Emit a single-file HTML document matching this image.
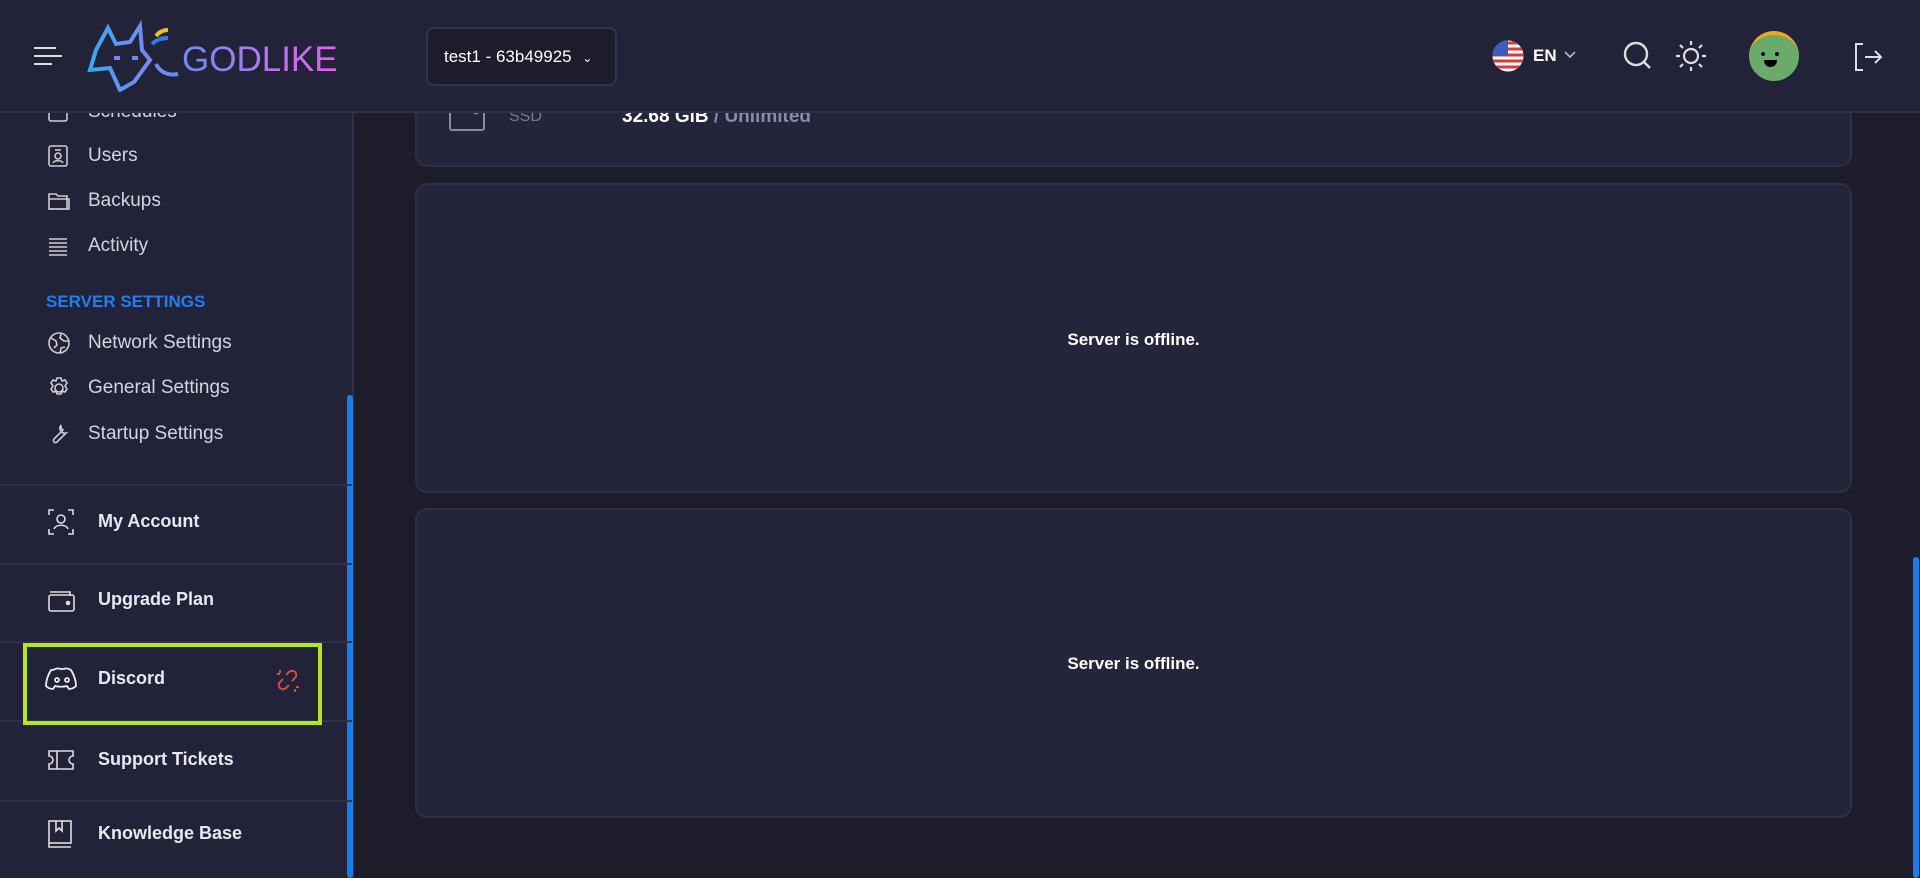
<!DOCTYPE html>
<html><head><meta charset="utf-8"><style>
*{box-sizing:border-box;margin:0;padding:0}
body{width:1920px;height:878px;overflow:hidden;background:#1c1c2a;font-family:"Liberation Sans",sans-serif;color:#e6e6ee;position:relative}
.header{position:absolute;left:0;top:0;width:1920px;height:113px;background:#222239;border-bottom:2px solid #303049;z-index:5}
.side{position:absolute;left:0;top:113px;width:354px;height:765px;background:#222239;border-right:2px solid #2e2e46}
.item{position:absolute;left:0;display:flex;align-items:center;font-size:19px;color:#d4d4de}
.item svg{position:absolute;left:0}
.div{position:absolute;left:0;width:352px;height:2px;background:#2f2f47}
.b{font-weight:bold;font-size:18px;color:#e8e8f0}
.card{position:absolute;left:415px;width:1437px;background:#24243a;border:2px solid #2e2e46;border-radius:12px}
.off{position:absolute;width:100%;text-align:center;font-weight:bold;font-size:17px;color:#fff}
</style></head><body>
<div class="card" style="top:60px;height:107px">
 <svg style="position:absolute;left:31px;top:40px" width="38" height="30" viewBox="0 0 38 30" fill="none" stroke="#8a8aa0" stroke-width="2"><rect x="2" y="2" width="34" height="26" rx="2"/><circle cx="28" cy="10" r="1.5" fill="#8a8aa0"/></svg>
 <div style="position:absolute;left:92px;top:46px;color:#7a7a92;font-size:16px">SSD</div>
 <div style="position:absolute;left:205px;top:44px;font-size:19px;font-weight:bold;color:#fff">32.68 GiB <span style="color:#8a8aa6">/ Unlimited</span></div>
</div>
<div class="card" style="top:183px;height:310px"><div class="off" style="top:145px">Server is offline.</div></div>
<div class="card" style="top:508px;height:310px"><div class="off" style="top:144px">Server is offline.</div></div>
<div style="position:absolute;left:1913px;top:557px;width:6px;height:321px;background:#1a7ee8;border-radius:3px"></div>

<div class="side">
 <div style="position:absolute;left:347px;top:282px;width:6px;height:483px;background:#1a7ee8;border-radius:3px"></div>
 <div class="item" style="left:47px;top:-12px"><svg width="22" height="22" viewBox="0 0 22 22" fill="none" stroke="#ccc" stroke-width="1.6"><rect x="2" y="2" width="18" height="18" rx="2"/><path d="M6 8h10"/></svg><span style="margin-left:41px">Schedules</span></div>
 <div class="item" style="left:47px;top:32px"><svg width="22" height="24" viewBox="0 0 22 24" fill="none" stroke="#ccc" stroke-width="1.6"><rect x="2" y="2" width="18" height="20" rx="2"/><path d="M8 6h6"/><circle cx="11" cy="12" r="3"/><path d="M6 19c1-3 9-3 10 0"/></svg><span style="margin-left:41px">Users</span></div>
 <div class="item" style="left:47px;top:77px"><svg width="24" height="22" viewBox="0 0 24 22" fill="none" stroke="#ccc" stroke-width="1.6"><path d="M2 4h7l2 2h9v13H2z"/><path d="M2 9h20v10H2"/></svg><span style="margin-left:41px">Backups</span></div>
 <div class="item" style="left:47px;top:122px"><svg width="22" height="22" viewBox="0 0 22 22" fill="none" stroke="#ccc" stroke-width="1.6"><path d="M2 4h18M2 8h18M2 12h18M2 16h18M2 20h18"/></svg><span style="margin-left:41px">Activity</span></div>
 <div style="position:absolute;left:46px;top:179px;color:#1f7ef0;font-weight:bold;font-size:17px">SERVER SETTINGS</div>
 <div class="item" style="left:47px;top:219px"><svg width="24" height="24" viewBox="0 0 24 24" fill="none" stroke="#ccc" stroke-width="1.6"><circle cx="12" cy="12" r="10"/><path d="M4 7l5 3 1 4-3 3M14 3l-1 4 4 3 5 0M13 22l1-5 4-1"/></svg><span style="margin-left:41px">Network Settings</span></div>
 <div class="item" style="left:47px;top:264px"><svg width="24" height="24" viewBox="0 0 24 24" fill="none" stroke="#ccc" stroke-width="1.6"><circle cx="12" cy="12" r="4"/><path d="M10 2h4l1 3 3-1 2 3-2 3 2 3-2 3-3-1-1 3h-4l-1-3-3 1-2-3 2-3-2-3 2-3 3 1z"/></svg><span style="margin-left:41px">General Settings</span></div>
 <div class="item" style="left:47px;top:310px"><svg width="24" height="24" viewBox="0 0 24 24" fill="none" stroke="#ccc" stroke-width="1.6"><path d="M14 3a5 5 0 0 0 5 8l-9 9a2 2 0 0 1-3-3l9-9a5 5 0 0 1-2-5z"/></svg><span style="margin-left:41px">Startup Settings</span></div>
 <div class="div" style="top:371px"></div>
 <div class="item b" style="left:47px;top:398px"><svg width="28" height="28" viewBox="0 0 28 28" fill="none" stroke="#ddd" stroke-width="1.6"><path d="M2 7V2h5M21 2h5v5M26 21v5h-5M7 26H2v-5"/><circle cx="14" cy="11" r="4"/><path d="M7 21c2-5 12-5 14 0"/></svg><span style="margin-left:51px">My Account</span></div>
 <div class="div" style="top:450px"></div>
 <div class="item b" style="left:47px;top:476px"><svg width="28" height="26" viewBox="0 0 28 26" fill="none" stroke="#ddd" stroke-width="1.6"><path d="M3 5h20v4"/><rect x="2" y="8" width="25" height="16" rx="2"/><circle cx="21" cy="16" r="1.5" fill="#ddd"/></svg><span style="margin-left:51px">Upgrade Plan</span></div>
 <div class="div" style="top:528px"></div>
 <div class="div" style="top:607px"></div>
 <div style="position:absolute;left:23px;top:530px;width:299px;height:82px;border:4px solid #b4e61c"></div>
 <div class="item b" style="left:45px;top:555px"><svg width="34" height="26" viewBox="0 0 34 26" fill="none" stroke="#eee" stroke-width="1.8"><path d="M8 4c4-2 6-2 7-1h4c1-1 3-1 7 1 3 5 5 10 5 16-2 2-5 3-7 3l-2-3c-4 1-8 1-12 0l-2 3c-2 0-5-1-7-3 0-6 2-11 5-16z"/><circle cx="12" cy="14" r="2"/><circle cx="22" cy="14" r="2"/></svg><span style="margin-left:53px">Discord</span></div>
 <svg style="position:absolute;left:275px;top:554px" width="26" height="26" viewBox="0 0 26 26" fill="none" stroke="#d24a4a" stroke-width="2"><path d="M11 8l3-3a4 4 0 0 1 6 6l-3 3M14 18l-3 3a4 4 0 0 1-6-6l3-3"/><path d="M5 3v3M2 7h3M21 20h3M20 22v3"/></svg>
 <div class="item b" style="left:47px;top:636px"><svg width="28" height="22" viewBox="0 0 28 22" fill="none" stroke="#ddd" stroke-width="1.6"><path d="M2 2h24v5a4 4 0 0 0 0 8v5H2v-5a4 4 0 0 0 0-8z"/><path d="M10 2v18"/></svg><span style="margin-left:51px">Support Tickets</span></div>
 <div class="div" style="top:687px"></div>
 <div class="item b" style="left:47px;top:710px"><svg width="26" height="30" viewBox="0 0 26 30" fill="none" stroke="#ddd" stroke-width="1.6"><rect x="2" y="2" width="22" height="22"/><path d="M2 24v4h22M9 2v10l3-3 3 3V2"/></svg><span style="margin-left:51px">Knowledge Base</span></div>
</div>

<div class="header">
 <svg style="position:absolute;left:33px;top:45px" width="30" height="22" viewBox="0 0 30 22" stroke="#ddd" stroke-width="2"><path d="M1 3h22M1 11h28M1 19h18"/></svg>
 <svg style="position:absolute;left:80px;top:20px" width="110" height="72" viewBox="0 0 110 72" fill="none" stroke-width="4">
  <defs><linearGradient id="g" x1="0" x2="1"><stop offset="0" stop-color="#3aa7f0"/><stop offset="1" stop-color="#7b86f0"/></linearGradient></defs>
  <path d="M28 8l8 16 14-2 10-16 2 24 8 10-16 22-14 8-10-22-20 2 6-20z" stroke="url(#g)"/>
  <path d="M34 38h6M52 38h6" stroke="#6b8bf0"/>
  <path d="M76 44c4 8 12 12 22 10" stroke="#6a8cf5"/>
  <path d="M76 16c3-4 7-6 12-6" stroke="#f2c21c"/><path d="M72 24c4-4 10-6 16-6" stroke="#2d7de8"/>
 </svg>
 <div style="position:absolute;left:182px;top:38px;font-size:35px;background:linear-gradient(90deg,#6a8cf5,#b078f2,#e85cf0);-webkit-background-clip:text;color:transparent;line-height:44px">GODLIKE</div>
 <div style="position:absolute;left:426px;top:27px;width:191px;height:59px;border:2px solid #33334c;border-radius:8px;background:#1c1c2b;font-size:17px;color:#fff;line-height:55px;padding-left:16px">test1 - 63b49925 <span style="font-size:12px;margin-left:6px">&#8964;</span></div>
 <svg style="position:absolute;left:1492px;top:40px" width="32" height="32" viewBox="0 0 32 32"><defs><clipPath id="c"><circle cx="16" cy="16" r="15.5"/></clipPath></defs><g clip-path="url(#c)"><rect width="32" height="32" fill="#fff"/><path d="M0 3h32M0 9h32M0 15h32M0 21h32M0 27h32" stroke="#d83a3a" stroke-width="3"/><rect width="16" height="16" fill="#3a5dbf"/></g></svg>
 <div style="position:absolute;left:1533px;top:46px;font-weight:bold;font-size:17px;color:#fff">EN</div>
 <svg style="position:absolute;left:1563px;top:50px" width="14" height="10" viewBox="0 0 14 10" fill="none" stroke="#bbb" stroke-width="1.6"><path d="M2 2l5 5 5-5"/></svg>
 <svg style="position:absolute;left:1623px;top:41px" width="30" height="30" viewBox="0 0 30 30" fill="none" stroke="#ddd" stroke-width="2.4"><circle cx="13" cy="13" r="11"/><path d="M21 21l6 6"/></svg>
 <svg style="position:absolute;left:1675px;top:39px" width="32" height="34" viewBox="0 0 32 34" fill="none" stroke="#ddd" stroke-width="2.2"><circle cx="16" cy="17" r="7"/><path d="M16 2v4M16 28v4M1 17h4M27 17h4M5 6l3 3M24 25l3 3M5 28l3-3M24 9l3-3"/></svg>
 <div style="position:absolute;left:1749px;top:31px;width:50px;height:50px;border-radius:50%;background:#6aab69;overflow:hidden;border-top:4px solid #f2a81c"></div>
 <div style="position:absolute;left:1761px;top:52px;width:4px;height:4px;background:#000;border-radius:50%"></div>
 <div style="position:absolute;left:1775px;top:52px;width:4px;height:4px;background:#000;border-radius:50%"></div>
 <div style="position:absolute;left:1764px;top:60px;width:13px;height:7px;background:#000;border-radius:0 0 7px 7px"></div>
 <svg style="position:absolute;left:1853px;top:42px" width="30" height="30" viewBox="0 0 30 30" fill="none" stroke="#ddd" stroke-width="2"><path d="M10 2H3v26h7M12 15h16M22 9l6 6-6 6"/></svg>
</div>
</body></html>
